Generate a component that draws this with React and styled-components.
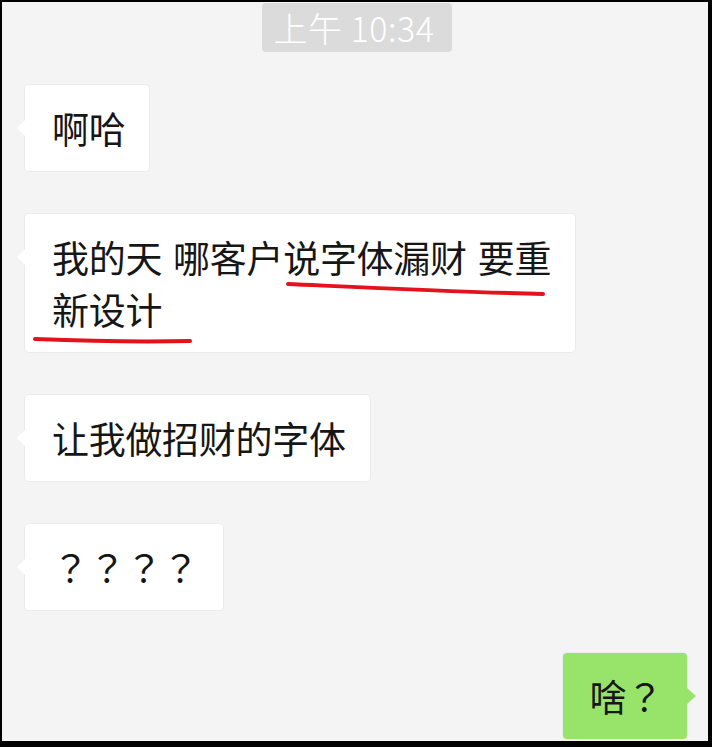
import React from "react";
import styled, { createGlobalStyle } from "styled-components";

const Global = createGlobalStyle`
  html, body { margin: 0; padding: 0; background: #fff; }
  body { font-family: "Noto Sans CJK TC", "Noto Sans", sans-serif; }
`;

const Frame = styled.div`
  width: 712px;
  height: 747px;
  box-sizing: border-box;
  border-style: solid;
  border-color: #000;
  border-width: 2px 4px 6px 2px;
  background: #f4f4f4;
  overflow: hidden;
  display: flex;
  flex-direction: column;
`;

const TimeRow = styled.div`
  display: flex;
  justify-content: center;
  padding-top: 1px;
  padding-left: 4px;
`;

const TimePill = styled.div`
  height: 49px;
  line-height: 49px;
  padding: 0 18px 0 12px;
  border-radius: 4px;
  background: #dbdbdb;
  color: #fff;
  font-size: 34px;
  letter-spacing: 0.5px;
  font-weight: 300;
  font-family: "Noto Sans CJK SC", "Noto Sans", sans-serif;
`;

const List = styled.div`
  display: flex;
  flex-direction: column;
  gap: 43px;
  padding: 33px 21px 0 23px;
`;

const Row = styled.div`
  display: flex;
  justify-content: ${(p) => (p.$mine ? "flex-end" : "flex-start")};
`;

const Bubble = styled.div`
  position: relative;
  box-sizing: border-box;
  padding: 17px 24px 17px 27px;
  border-radius: 4px;
  background: ${(p) => (p.$mine ? "#98e46a" : "#fff")};
  box-shadow: 0 0 0 1px rgba(0, 0, 0, 0.035);
  color: #161616;
  font-family: "Noto Sans CJK TC", "Noto Sans CJK SC", sans-serif;
  font-size: 37px;
  line-height: 52px;
  word-spacing: 3px;
  letter-spacing: -0.3px;
  white-space: pre-line;

  &::before {
    content: "";
    position: absolute;
    top: 35px;
    width: 0;
    height: 0;
    border-style: solid;
    ${(p) =>
      p.$mine
        ? `right: -9px; border-width: 8px 0 8px 9px; border-color: transparent transparent transparent #98e46a;`
        : `left: -8px; border-width: 8px 8px 8px 0; border-color: transparent #fff transparent transparent;`}
  }
`;

const Markup = styled.svg`
  position: absolute;
  left: 0;
  top: 0;
  width: 100%;
  height: 100%;
  overflow: visible;
  pointer-events: none;
`;

const messages = [
  { id: 1, text: "啊哈" },
  { id: 2, text: "我的天 哪客户说字体漏财 要重\n新设计", marked: true },
  { id: 3, text: "让我做招财的字体" },
  { id: 4, text: "？？？？" },
  { id: 5, text: "啥？", mine: true },
];

function RedMarks() {
  return (
    <Markup>
      <path
        d="M263 70 C 330 73, 430 78, 518 80"
        fill="none"
        stroke="#e3121c"
        strokeWidth="4"
        strokeLinecap="round"
      />
      <path
        d="M10 125 C 60 127, 120 128, 165 127"
        fill="none"
        stroke="#e3121c"
        strokeWidth="4"
        strokeLinecap="round"
      />
    </Markup>
  );
}

export default function App() {
  return (
    <>
      <Global />
      <Frame>
        <TimeRow>
          <TimePill>上午 10:34</TimePill>
        </TimeRow>
        <List>
          {messages.map((m) => (
            <Row key={m.id} $mine={m.mine}>
              <Bubble $mine={m.mine}>
                {m.text}
                {m.marked && <RedMarks />}
              </Bubble>
            </Row>
          ))}
        </List>
      </Frame>
    </>
  );
}
